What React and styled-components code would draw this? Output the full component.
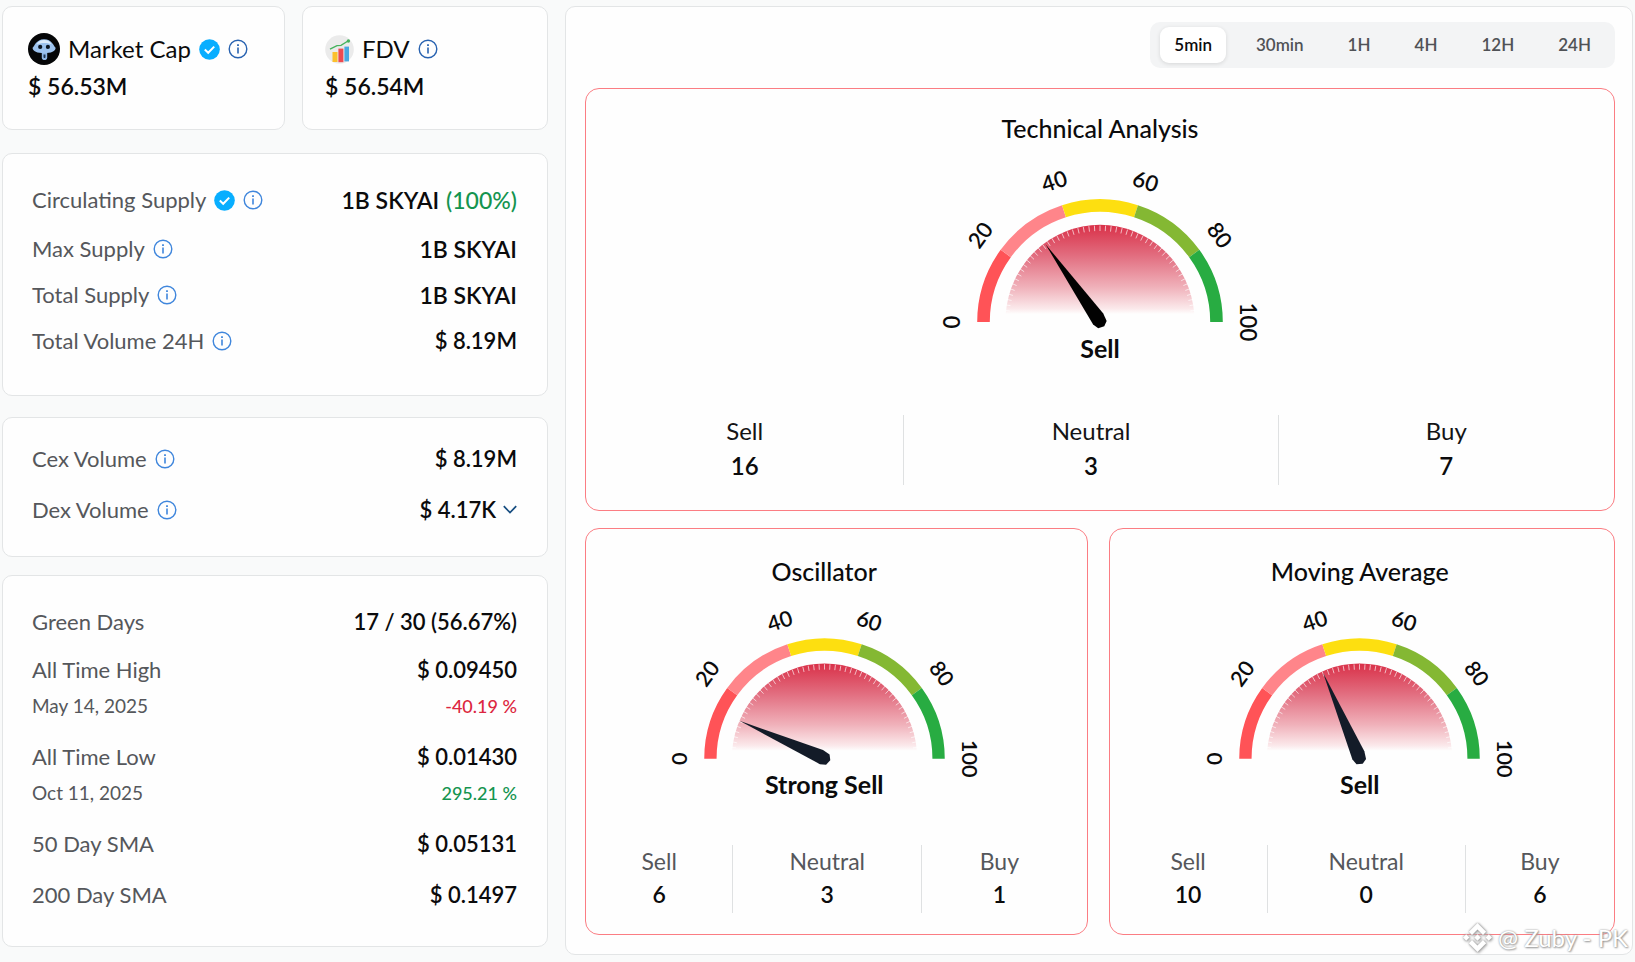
import React, { useId, useState } from "react";
import styled, { createGlobalStyle, css } from "styled-components";

const GlobalStyle = createGlobalStyle`
  *, *::before, *::after { box-sizing: border-box; }
  body {
    margin: 0;
    background: #f9fafa;
    color: #0b0b0c;
    font-family: Lato, "Liberation Sans", sans-serif;
    font-size: 22px;
    line-height: 28px;
  }
  h2, p, dl, dt, dd { margin: 0; font: inherit; }
`;

const Page = styled.main`
  position: relative;
  display: grid;
  grid-template-columns: minmax(0, 546fr) minmax(0, 1068fr);
  align-items: start;
  gap: 17px;
  padding: 6px 2px 7px;
`;

const Column = styled.div`
  display: flex;
  flex-direction: column;
`;

const Surface = styled.section`
  background: #fefefe;
  border: 1px solid #e3e5e6;
  border-radius: 10px;
`;

const TopCards = styled.div`
  display: grid;
  grid-template-columns: 283fr 246fr;
  gap: 17px;
  margin-bottom: 23px;
`;

const CapCard = styled(Surface)`
  padding: 26px 20px 29px ${(p) => p.$inset}px;
`;

const CapTitle = styled.h2`
  display: flex;
  align-items: center;
  gap: 8px;
  height: 32px;
  margin-bottom: 7px;
  font-size: 24px;
  white-space: nowrap;
`;

const CapValue = styled.p`
  font-size: 23px;
  font-weight: 600;
`;

const InfoCard = styled(Surface).attrs({ as: "dl" })`
  padding: ${(p) => p.$top}px 30px ${(p) => p.$bottom}px 29px;
  margin-bottom: ${(p) => p.$after}px;
`;

const tones = { up: "#14944f", down: "#dc2640" };

const Row = styled.div`
  display: flex;
  align-items: center;
  justify-content: space-between;
  margin-bottom: ${(p) => p.$after || 0}px;
  white-space: nowrap;
  ${(p) => p.$small && css`font-size: 19px;`}
`;

const Label = styled.dt`
  display: flex;
  align-items: center;
  gap: 8px;
  color: #55575b;
`;

const Value = styled.dd`
  display: flex;
  align-items: center;
  gap: 7px;
  color: ${(p) => tones[p.$tone] || "#0b0b0c"};
  font-weight: 600;
  ${(p) => p.$tone && css`font-size: 18px; font-weight: 500;`}
  ${(p) => p.$token && css`font-size: 23px;`}
`;

const Share = styled.span`
  color: ${tones.up};
  font-weight: 500;
`;

const IconButton = styled.button`
  display: inline-flex;
  padding: 0;
  border: 0;
  background: none;
  cursor: pointer;
`;

const Panel = styled(Surface)`
  padding: 15px 17px 19px 19px;
`;

const Tabs = styled.div`
  display: flex;
  gap: 16px;
  width: fit-content;
  margin: 0 0 20px auto;
  padding: 5px 10px;
  border-radius: 10px;
  background: #f3f4f5;
`;

const Tab = styled.button`
  padding: 0 14px;
  border: 0;
  border-radius: 9px;
  background: ${(p) => (p.$active ? "#ffffff" : "transparent")};
  box-shadow: ${(p) => (p.$active ? "0 1px 4px rgba(0, 0, 0, 0.12)" : "none")};
  color: ${(p) => (p.$active ? "#0b0b0c" : "#505256")};
  font: 600 17px/36px Lato, "Liberation Sans", sans-serif;
  cursor: pointer;
`;

const GaugeCard = styled.section`
  padding: ${(p) => (p.$large ? "25px 0 25px" : "28px 0 21px")};
  border: 1px solid #fb7d83;
  border-radius: 14px;
`;

const Pair = styled.div`
  display: grid;
  grid-template-columns: 503fr 507fr;
  gap: 21px;
  margin-top: 17px;
`;

const GaugeBody = styled.div`
  display: flex;
  flex-direction: column;
  align-items: center;
  padding-right: ${(p) => p.$shift || 0}px;
`;

const GaugeTitle = styled.h2`
  font-size: 25px;
  font-weight: 500;
`;

const GaugeSvg = styled.svg`
  display: block;
  width: ${(p) => (p.$large ? 340 : 333)}px;
  height: auto;
  margin-top: ${(p) => (p.$large ? 20 : 17)}px;
  overflow: visible;
`;

const Verdict = styled.p`
  font-size: 25px;
  font-weight: 700;
`;

const Stats = styled.dl`
  display: grid;
  grid-template-columns: ${(p) => p.$columns};
  margin-top: ${(p) => (p.$large ? 53 : 47)}px;
  padding-right: ${(p) => p.$inset || 0}px;
`;

const Stat = styled.div`
  display: flex;
  flex-direction: column;
  align-items: center;
  gap: ${(p) => (p.$large ? 7 : 5)}px;
  padding: 2px 0 5px;
  font-size: ${(p) => (p.$large ? 24 : 23)}px;
  & + & { border-left: 1px solid #dfe1e2; }
  dt { color: ${(p) => (p.$large ? "#141415" : "#55575b")}; }
  dd { font-weight: 600; }
`;

const Watermark = styled.div`
  position: absolute;
  right: 7px;
  bottom: 10px;
  display: flex;
  align-items: center;
  gap: 6px;
  color: #ffffff;
  font-size: 24px;
  text-shadow: 0 0 2px #8f8f8f, 1px 1px 2px #9a9a9a;
  white-space: pre;
  svg { filter: drop-shadow(0 0 1px #8f8f8f) drop-shadow(1px 1px 1px #b0b0b0); }
`;

function Info({ about, color = "#3f86dc" }) {
  return (
    <IconButton type="button" aria-label={`About ${about}`}>
      <svg width="20" height="20" viewBox="0 0 20 20" fill="none" stroke={color}>
        <circle cx="10" cy="10" r="8.8" strokeWidth="1.4" />
        <path d="M10 8.5V14.6" strokeWidth="1.6" />
        <path d="M10 5.2V7" strokeWidth="1.8" />
      </svg>
    </IconButton>
  );
}

function Verified() {
  return (
    <svg width="21" height="21" viewBox="0 0 21 21" role="img" aria-label="Verified">
      <circle cx="10.5" cy="10.5" r="10.3" fill="#08aeff" />
      <path d="M5.8 10.6L9.2 13.8L15.2 7.6" fill="none" stroke="#fff" strokeWidth="2" />
    </svg>
  );
}

function Chevron() {
  return (
    <svg width="14" height="10" viewBox="0 0 14 10" fill="none" stroke="#164d80" strokeWidth="1.7">
      <path d="M0.8 1.2L7 7.6L13.2 1.2" />
    </svg>
  );
}

function TokenLogo() {
  return (
    <svg width="32" height="32" viewBox="0 0 32 32" aria-hidden="true">
      <circle cx="16" cy="16" r="16" fill="#050607" />
      <path d="M13.8 17H19.2V24.4C19.2 28 13.8 28 13.8 24.4Z" fill="#8fb7e6" />
      <path d="M15.5 21.5H17.5V24C17.5 25.4 15.5 25.4 15.5 24Z" fill="#1d3552" />
      <path d="M4.6 14.8C6.4 13.4 8 6.4 16 6.2C24 6.2 25.6 13 27.6 14.8C27.8 18.4 23 20.2 16.2 20.2C9.4 20.2 4.4 18.4 4.6 14.8Z" fill="#9cc2ee" />
      <path d="M8.6 11.6C10 8.2 13 7 16.2 7C19.4 7 22 8.4 23.4 11.2C19 9.6 12.8 9.6 8.6 11.6Z" fill="#dcebfb" />
      <circle cx="12.2" cy="13.9" r="2.1" fill="#0b1420" />
      <circle cx="19.9" cy="13.9" r="2.1" fill="#0b1420" />
    </svg>
  );
}

function ChartLogo() {
  return (
    <svg width="29" height="29" viewBox="0 0 29 29" aria-hidden="true">
      <circle cx="14.5" cy="14.5" r="14.3" fill="#ebebeb" />
      <rect x="7.5" y="17" width="5" height="10" fill="#fbc02d" />
      <rect x="13.4" y="13.6" width="5" height="13.6" fill="#ee4a50" />
      <rect x="19.4" y="11.6" width="4.6" height="14.8" fill="#4aa8e0" />
      <path d="M5 14.2L12 10.6L16 10.4L23 6" fill="none" stroke="#46b35d" strokeWidth="1.4" />
      <circle cx="23.4" cy="6" r="1.7" fill="#46b35d" />
    </svg>
  );
}

const point = (r, deg) => {
  const a = (deg * Math.PI) / 180;
  return [r * Math.sin(a), -r * Math.cos(a)];
};

const ARCS = [
  ["#ff5357", -90],
  ["#ff858a", -54],
  ["#fddf10", -18],
  ["#84b833", 18],
  ["#28ac42", 54],
];

function Gauge({ angle, large, needle }) {
  const id = useId();
  return (
    <GaugeSvg $large={large} viewBox="-170 -160 340 172" role="img" aria-label="Gauge from 0 to 100">
      <defs>
        <linearGradient id={id} x1="0" y1="0" x2="0" y2="1">
          <stop offset="0" stopColor="#d93048" />
          <stop offset="0.35" stopColor="#e26e80" />
          <stop offset="0.7" stopColor="#f0b1ba" />
          <stop offset="0.94" stopColor="#fbe9eb" />
          <stop offset="1" stopColor="#fefefe" />
        </linearGradient>
      </defs>
      {ARCS.map(([color, start]) => {
        const [x1, y1] = point(116.5, start);
        const [x2, y2] = point(116.5, start + 36);
        return (
          <path key={start} d={`M${x1} ${y1}A116.5 116.5 0 0 1 ${x2} ${y2}`} fill="none" stroke={color} strokeWidth="12.6" />
        );
      })}
      <path d="M-94.3 -8A94.6 97 0 0 1 94.3 -8Z" fill={`url(#${id})`} />
      {Array.from({ length: 51 }, (_, i) => {
        const deg = -83 + (i * 166) / 50;
        const [x1, y1] = point(91, deg);
        const [x2, y2] = point(96.5, deg);
        return <path key={i} d={`M${x1} ${y1}L${x2} ${y2}`} stroke="#fff" strokeWidth="1" opacity="0.65" />;
      })}
      <path d="M0 -95L7.5 -5L6 3L1 6L-5 4L-7 -2Z" fill={needle} transform={`rotate(${angle})`} />
      {[0, 20, 40, 60, 80, 100].map((n, i) => {
        const deg = -90 + i * 36;
        return (
          <text key={n} y="-140" textAnchor="middle" fontSize="22" fontWeight="600" fill="#0b0b0c" transform={`rotate(${deg})`}>
            {n}
          </text>
        );
      })}
    </GaugeSvg>
  );
}

function Indicator({ title, verdict, angle, needle = "#131b28", stats, columns, large, shift, inset }) {
  return (
    <GaugeCard $large={large}>
      <GaugeBody $shift={shift}>
        <GaugeTitle>{title}</GaugeTitle>
        <Gauge angle={angle} large={large} needle={needle} />
        <Verdict>{verdict}</Verdict>
      </GaugeBody>
      <Stats $columns={columns} $large={large} $inset={inset}>
        {["Sell", "Neutral", "Buy"].map((name, i) => (
          <Stat key={name} $large={large}>
            <dt>{name}</dt>
            <dd>{stats[i]}</dd>
          </Stat>
        ))}
      </Stats>
    </GaugeCard>
  );
}

const PERIODS = ["5min", "30min", "1H", "4H", "12H", "24H"];

export default function App() {
  const [period, setPeriod] = useState("5min");
  return (
    <>
      <GlobalStyle />
      <Page>
        <Column>
          <TopCards>
            <CapCard $inset={25}>
              <CapTitle>
                <TokenLogo />
                Market Cap
                <Verified />
                <Info about="Market Cap" color="#2862b0" />
              </CapTitle>
              <CapValue>$ 56.53M</CapValue>
            </CapCard>
            <CapCard $inset={22}>
              <CapTitle>
                <ChartLogo />
                FDV
                <Info about="FDV" color="#2862b0" />
              </CapTitle>
              <CapValue>$ 56.54M</CapValue>
            </CapCard>
          </TopCards>

          <InfoCard $top={32} $bottom={40} $after={21}>
            <Row $after={21}>
              <Label>Circulating Supply <Verified /><Info about="Circulating Supply" /></Label>
              <Value $token>1B SKYAI <Share>(100%)</Share></Value>
            </Row>
            <Row $after={18}>
              <Label>Max Supply <Info about="Max Supply" /></Label>
              <Value $token>1B SKYAI</Value>
            </Row>
            <Row $after={18}>
              <Label>Total Supply <Info about="Total Supply" /></Label>
              <Value $token>1B SKYAI</Value>
            </Row>
            <Row>
              <Label>Total Volume 24H <Info about="Total Volume 24H" /></Label>
              <Value>$ 8.19M</Value>
            </Row>
          </InfoCard>

          <InfoCard $top={27} $bottom={32} $after={18}>
            <Row $after={23}>
              <Label>Cex Volume <Info about="Cex Volume" /></Label>
              <Value>$ 8.19M</Value>
            </Row>
            <Row>
              <Label>Dex Volume <Info about="Dex Volume" /></Label>
              <Value>
                $ 4.17K
                <IconButton type="button" aria-label="Show Dex Volume details"><Chevron /></IconButton>
              </Value>
            </Row>
          </InfoCard>

          <InfoCard $top={32} $bottom={37} $after={0}>
            <Row $after={20}>
              <Label>Green Days</Label>
              <Value>17 / 30 (56.67%)</Value>
            </Row>
            <Row $after={8}>
              <Label>All Time High</Label>
              <Value>$ 0.09450</Value>
            </Row>
            <Row $small $after={23}>
              <Label>May 14, 2025</Label>
              <Value $tone="down">-40.19 %</Value>
            </Row>
            <Row $after={8}>
              <Label>All Time Low</Label>
              <Value>$ 0.01430</Value>
            </Row>
            <Row $small $after={23}>
              <Label>Oct 11, 2025</Label>
              <Value $tone="up">295.21 %</Value>
            </Row>
            <Row $after={23}>
              <Label>50 Day SMA</Label>
              <Value>$ 0.05131</Value>
            </Row>
            <Row>
              <Label>200 Day SMA</Label>
              <Value>$ 0.1497</Value>
            </Row>
          </InfoCard>
        </Column>

        <Panel>
          <Tabs role="tablist" aria-label="Period">
            {PERIODS.map((name) => (
              <Tab
                key={name}
                type="button"
                role="tab"
                aria-selected={period === name}
                $active={period === name}
                onClick={() => setPeriod(name)}
              >
                {name}
              </Tab>
            ))}
          </Tabs>
          <Indicator
            large
            title="Technical Analysis"
            verdict="Sell"
            angle={-35}
            needle="#020202"
            stats={[16, 3, 7]}
            columns="318fr 375fr 337fr"
          />
          <Pair>
            <Indicator
              title="Oscillator"
              verdict="Strong Sell"
              angle={-66}
              stats={[6, 3, 1]}
              columns="147fr 190fr 156fr"
              shift={24}
              inset={10}
            />
            <Indicator
              title="Moving Average"
              verdict="Sell"
              angle={-23}
              stats={[10, 0, 6]}
              columns="158fr 199fr 150fr"
              shift={4}
            />
          </Pair>
        </Panel>

        <Watermark>
          <svg width="29" height="29" viewBox="0 0 28 28" fill="#fff" aria-hidden="true">
            <path d="M14 0L22.4 8.4L19.3 11.5L14 6.2L8.7 11.5L5.6 8.4Z" />
            <path d="M14 28L22.4 19.6L19.3 16.5L14 21.8L8.7 16.5L5.6 19.6Z" />
            <path d="M14 10.9L17.1 14L14 17.1L10.9 14Z" />
            <path d="M3.1 10.9L6.2 14L3.1 17.1L0 14Z" />
            <path d="M24.9 10.9L28 14L24.9 17.1L21.8 14Z" />
          </svg>
          @ Zuby - PK
        </Watermark>
      </Page>
    </>
  );
}
